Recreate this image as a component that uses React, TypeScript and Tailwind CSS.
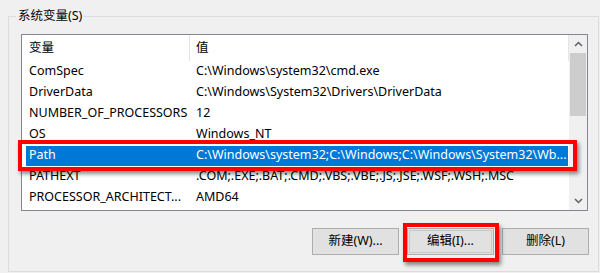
import React from "react";

const font = { fontFamily: '"Noto Sans", "Noto Sans CJK SC", sans-serif' };

const rows: [string, string][] = [
  ["ComSpec", "C:\\Windows\\system32\\cmd.exe"],
  ["DriverData", "C:\\Windows\\System32\\Drivers\\DriverData"],
  ["NUMBER_OF_PROCESSORS", "12"],
  ["OS", "Windows_NT"],
  ["Path", "C:\\Windows\\system32;C:\\Windows;C:\\Windows\\System32\\Wb..."],
  ["PATHEXT", ".COM;.EXE;.BAT;.CMD;.VBS;.VBE;.JS;.JSE;.WSF;.WSH;.MSC"],
  ["PROCESSOR_ARCHITECT...", "AMD64"],
];

export default function App() {
  return (
    <div
      className="relative w-[600px] h-[273px] bg-[#f0f0f0] overflow-hidden text-[12px] text-black"
      style={font}
    >
      <div className="relative ml-[8px] mt-[16px] w-[591px] h-[256px] border border-[#dcdcdc] pt-[17px] pl-[12px]">
        <div className="absolute left-[7px] top-[-9px] bg-[#f0f0f0] px-[2px] leading-[16px] text-[12.5px]">
          系统变量(S)
        </div>
        {/* list */}
        <div className="flex w-[567px] h-[177px] border border-[#828790] bg-white text-[12.5px]">
          <div className="flex-1 flex flex-col">
            <div className="flex h-[26px] items-center">
              <div className="w-[168px] h-full flex items-center pl-[7px] border-r border-[#e5e5e5]">变量</div>
              <div className="flex-1 h-full flex items-center pl-[6px] border-r border-[#e5e5e5]">值</div>
            </div>
            {rows.map(([k, v], i) => {
              const sel = k === "Path";
              return (
                <div key={i} className="flex h-[21px] items-center pl-[4px]">
                  <div
                    className={
                      sel
                        ? "flex w-[542px] h-[20px] items-center bg-[#0078d7] text-white"
                        : "flex w-[542px] h-[20px] items-center"
                    }
                  >
                    <div className="w-[167px] pl-[3px] whitespace-nowrap overflow-hidden">{k}</div>
                    <div className="flex-1 pl-[3px] whitespace-nowrap overflow-hidden">{v}</div>
                  </div>
                </div>
              );
            })}
          </div>
          {/* scrollbar */}
          <div className="w-[18px] flex flex-col bg-[#f0f0f0]">
            <div className="h-[18px] flex items-center justify-center">
              <svg width="9" height="6" viewBox="0 0 9 6">
                <path d="M1 5 L4.5 1.5 L8 5" fill="none" stroke="#606060" strokeWidth="1.5" />
              </svg>
            </div>
            <div className="mx-[1px] h-[63px] bg-[#cdcdcd]" />
            <div className="flex-1" />
            <div className="h-[18px] flex items-center justify-center">
              <svg width="9" height="6" viewBox="0 0 9 6">
                <path d="M1 1 L4.5 4.5 L8 1" fill="none" stroke="#606060" strokeWidth="1.5" />
              </svg>
            </div>
          </div>
        </div>
        {/* buttons */}
        <div className="flex gap-[8px] ml-[291px] mt-[17px]">
          <button className="w-[87px] h-[27px] bg-[#e1e1e1] border border-[#adadad] text-[12.5px]">新建(W)...</button>
          <button className="w-[87px] h-[27px] bg-[#e1e1e1] border border-[#adadad] text-[12.5px] shadow-[inset_0_0_0_1px_#e1e1e1,inset_0_0_0_2px_#c8c8c8]">编辑(I)...</button>
          <button className="w-[87px] h-[27px] bg-[#e1e1e1] border border-[#adadad] text-[12.5px]">删除(L)</button>
        </div>
      </div>
      {/* red annotation boxes */}
      <div className="absolute left-[18px] top-[140px] w-[559px] h-[31px] border-[4px] border-[#ff0000] shadow-[2px_3px_4px_rgba(0,0,0,0.45)]" />
      <div className="absolute left-[403px] top-[223px] w-[96px] h-[39px] border-[4px] border-[#ff0000] shadow-[2px_3px_4px_rgba(0,0,0,0.45)]" />
    </div>
  );
}
